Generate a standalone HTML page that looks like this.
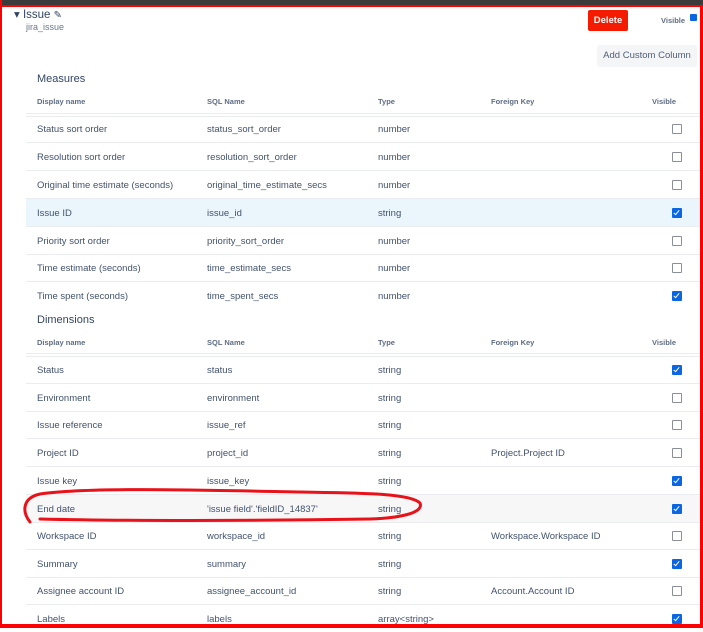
<!DOCTYPE html>
<html><head><style>
body{margin:0;width:703px;height:628px;overflow:hidden;background:#fff;font-family:"Liberation Sans",sans-serif;color:#42526e;position:relative}
.a{position:absolute;white-space:nowrap}
.t{font-size:9.5px}
.h{font-size:7.5px;font-weight:bold;color:#5e6c84}
.row{position:absolute;left:26px;width:674px;height:27px;border-bottom:1px solid #ebecf0}
.row span{position:absolute;top:9px;font-size:9.5px}
.cb{position:absolute;left:646px;top:9px;width:8px;height:8px;border:1px solid #8a8f99;border-radius:1px;background:#fff}
.cb.on{background:#0b66e4;border-color:#0b66e4}
.cb.on:after{content:"";position:absolute;left:2px;top:0px;width:2px;height:5px;border:solid #fff;border-width:0 1.5px 1.5px 0;transform:rotate(40deg)}
</style></head><body>
<div class="a" style="left:0;top:0;width:703px;height:5px;background:#3b3b3b"></div>
<div class="a" style="left:0;top:5px;width:703px;height:2px;background:#f00"></div>
<div class="a" style="left:0;top:0;width:2px;height:628px;background:#f00"></div>
<div class="a" style="left:700px;top:5px;width:3px;height:623px;background:#f00"></div>
<div class="a" style="left:0;top:624px;width:703px;height:4px;background:#f00"></div>

<div class="a" style="left:14px;top:7px;font-size:11.5px;color:#344563">▾ Issue <span style="font-size:10px">✎</span></div>
<div class="a" style="left:26px;top:22px;font-size:9px;color:#6b778c">jira_issue</div>
<div class="a" style="left:588px;top:10px;width:40px;height:21px;background:#f51b00;border-radius:2px;color:#fff;font-size:9.5px;font-weight:bold;text-align:center;line-height:21px">Delete</div>
<div class="a h" style="left:661px;top:16px">Visible</div>
<div class="a" style="left:690px;top:14px;width:7px;height:7px;background:#0b66e4;border-radius:1px"></div>
<div class="a" style="left:597px;top:45px;width:100px;height:22px;background:#f4f5f7;border-radius:3px;font-size:9.5px;color:#505f79;line-height:22px;text-align:center">Add Custom Column</div>

<div class="a" style="left:37px;top:73px;font-size:11px;color:#344563">Measures</div>
<div class="a h" style="left:37px;top:97px">Display name</div><div class="a h" style="left:207px;top:97px">SQL Name</div><div class="a h" style="left:378px;top:97px">Type</div><div class="a h" style="left:491px;top:97px">Foreign Key</div><div class="a h" style="left:652px;top:97px">Visible</div>
<div class="a" style="left:26px;top:113px;width:674px;height:2px;border-bottom:1px solid #ebecf0;border-top:1px solid #ebecf0"></div>

<div class="row" style="top:115px"><span style="left:11px">Status sort order</span><span style="left:181px">status_sort_order</span><span style="left:352px">number</span><div class="cb"></div></div>
<div class="row" style="top:143px"><span style="left:11px">Resolution sort order</span><span style="left:181px">resolution_sort_order</span><span style="left:352px">number</span><div class="cb"></div></div>
<div class="row" style="top:171px"><span style="left:11px">Original time estimate (seconds)</span><span style="left:181px">original_time_estimate_secs</span><span style="left:352px">number</span><div class="cb"></div></div>
<div class="row" style="top:199px;background:#ebf5fc"><span style="left:11px">Issue ID</span><span style="left:181px">issue_id</span><span style="left:352px">string</span><div class="cb on"></div></div>
<div class="row" style="top:227px"><span style="left:11px">Priority sort order</span><span style="left:181px">priority_sort_order</span><span style="left:352px">number</span><div class="cb"></div></div>
<div class="row" style="top:254px"><span style="left:11px">Time estimate (seconds)</span><span style="left:181px">time_estimate_secs</span><span style="left:352px">number</span><div class="cb"></div></div>
<div class="row" style="top:282px;border-bottom:none"><span style="left:11px">Time spent (seconds)</span><span style="left:181px">time_spent_secs</span><span style="left:352px">number</span><div class="cb on"></div></div>

<div class="a" style="left:37px;top:314px;font-size:11px;color:#344563">Dimensions</div>
<div class="a h" style="left:37px;top:338px">Display name</div><div class="a h" style="left:207px;top:338px">SQL Name</div><div class="a h" style="left:378px;top:338px">Type</div><div class="a h" style="left:491px;top:338px">Foreign Key</div><div class="a h" style="left:652px;top:338px">Visible</div>
<div class="a" style="left:26px;top:353px;width:674px;height:2px;border-bottom:1px solid #ebecf0;border-top:1px solid #ebecf0"></div>

<div class="row" style="top:356px"><span style="left:11px">Status</span><span style="left:181px">status</span><span style="left:352px">string</span><div class="cb on"></div></div>
<div class="row" style="top:384px"><span style="left:11px">Environment</span><span style="left:181px">environment</span><span style="left:352px">string</span><div class="cb"></div></div>
<div class="row" style="top:411px"><span style="left:11px">Issue reference</span><span style="left:181px">issue_ref</span><span style="left:352px">string</span><div class="cb"></div></div>
<div class="row" style="top:439px"><span style="left:11px">Project ID</span><span style="left:181px">project_id</span><span style="left:352px">string</span><span style="left:465px">Project.Project ID</span><div class="cb"></div></div>
<div class="row" style="top:467px"><span style="left:11px">Issue key</span><span style="left:181px">issue_key</span><span style="left:352px">string</span><div class="cb on"></div></div>
<div class="row" style="top:495px;background:#f7f7f7"><span style="left:11px">End date</span><span style="left:181px">'issue field'.'fieldID_14837'</span><span style="left:352px">string</span><div class="cb on"></div></div>
<div class="row" style="top:522px"><span style="left:11px">Workspace ID</span><span style="left:181px">workspace_id</span><span style="left:352px">string</span><span style="left:465px">Workspace.Workspace ID</span><div class="cb"></div></div>
<div class="row" style="top:550px"><span style="left:11px">Summary</span><span style="left:181px">summary</span><span style="left:352px">string</span><div class="cb on"></div></div>
<div class="row" style="top:577px"><span style="left:11px">Assignee account ID</span><span style="left:181px">assignee_account_id</span><span style="left:352px">string</span><span style="left:465px">Account.Account ID</span><div class="cb"></div></div>
<div class="row" style="top:605px;border-bottom:none"><span style="left:11px">Labels</span><span style="left:181px">labels</span><span style="left:352px">array&lt;string&gt;</span><div class="cb on"></div></div>

<svg class="a" style="left:0;top:0" width="703" height="628"><path d="M30 522 C22 512 22 498 40 494 C90 487 200 490 300 492 C360 493 410 493 420 503 C424 513 400 518 370 519 C250 521 120 521 40 519" fill="none" stroke="#e8121a" stroke-width="3" stroke-linecap="round"/></svg>
</body></html>
